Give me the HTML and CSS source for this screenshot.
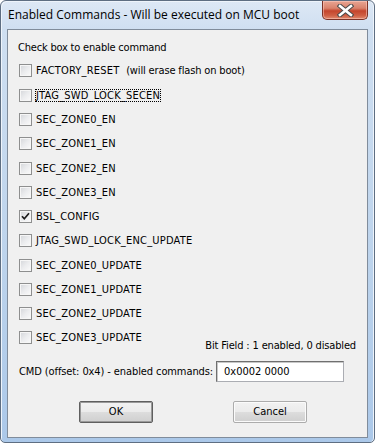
FILE: index.html
```html
<!DOCTYPE html>
<html>
<head>
<meta charset="utf-8">
<link rel="stylesheet" href="styles.css">
</head>
<body>
<div class="window">
  <div class="titlebar">
    <span class="title">Enabled Commands - Will be executed on MCU boot</span>
    <div class="close">
      <svg width="17" height="13" viewBox="0 0 17 13">
        <path d="M3 2 L14 11 M14 2 L3 11" stroke="#4a4a4a" stroke-width="4.6" stroke-linecap="square" fill="none"/>
        <path d="M3 2 L14 11 M14 2 L3 11" stroke="#ffffff" stroke-width="2.6" stroke-linecap="square" fill="none"/>
      </svg>
    </div>
  </div>
  <div class="client">
    <div class="heading">Check box to enable command</div>
    <ul class="list">
      <li class="row"><span class="cb"></span><span class="lbl">FACTORY_RESET&nbsp; <span class="note">(will erase flash on boot)</span></span></li>
      <li class="row"><span class="cb"></span><span class="lbl focus">JTAG_SWD_LOCK_SECEN</span></li>
      <li class="row"><span class="cb"></span><span class="lbl">SEC_ZONE0_EN</span></li>
      <li class="row"><span class="cb"></span><span class="lbl">SEC_ZONE1_EN</span></li>
      <li class="row"><span class="cb"></span><span class="lbl">SEC_ZONE2_EN</span></li>
      <li class="row"><span class="cb"></span><span class="lbl">SEC_ZONE3_EN</span></li>
      <li class="row"><span class="cb checked"><svg width="11" height="11" viewBox="0 0 11 11"><path d="M2 5.2 L4.3 7.8 L9 2.2" stroke="#1c1c1c" stroke-width="1.7" fill="none"/></svg></span><span class="lbl">BSL_CONFIG</span></li>
      <li class="row"><span class="cb"></span><span class="lbl">JTAG_SWD_LOCK_ENC_UPDATE</span></li>
      <li class="row"><span class="cb"></span><span class="lbl">SEC_ZONE0_UPDATE</span></li>
      <li class="row"><span class="cb"></span><span class="lbl">SEC_ZONE1_UPDATE</span></li>
      <li class="row"><span class="cb"></span><span class="lbl">SEC_ZONE2_UPDATE</span></li>
      <li class="row"><span class="cb"></span><span class="lbl">SEC_ZONE3_UPDATE</span></li>
    </ul>
    <div class="bitfield">Bit Field : 1 enabled, 0 disabled</div>
    <div class="cmd">
      <span class="cmd-label">CMD (offset: 0x4) - enabled commands:</span>
      <div class="input">0x0002 0000</div>
    </div>
    <div class="buttons">
      <div class="btn default">OK</div>
      <div class="btn">Cancel</div>
    </div>
  </div>
</div>
</body>
</html>
```
FILE: styles.css
```css
html, body {
  margin: 0;
  padding: 0;
  width: 375px;
  height: 443px;
  overflow: hidden;
  background: #ffffff;
}

.window {
  box-sizing: border-box;
  width: 375px;
  height: 443px;
  border: 1px solid #5e6e82;
  border-radius: 6px 6px 5px 5px;
  background: linear-gradient(to bottom, #dde8f5 0px, #cfdff1 28px, #bcd3ec 60%, #abc8e9 100%);
  display: flex;
  flex-direction: column;
  padding: 0 6px 4px 6px;
  box-shadow: inset 1px 1px 0 #eef4fb, inset -1px 0 0 #eef4fb;
}

.titlebar {
  height: 28px;
  display: flex;
  align-items: flex-start;
  flex-shrink: 0;
}

.title {
  font-family: "Open Sans", "Noto Sans", sans-serif;
  font-size: 12px;
  line-height: 16px;
  color: #000;
  padding-top: 6px;
  padding-left: 1px;
  white-space: nowrap;
}

.close {
  margin-left: auto;
  box-sizing: border-box;
  width: 46px;
  height: 19px;
  border: 1px solid #7b3227;
  border-top: none;
  border-radius: 0 0 5px 5px;
  background: linear-gradient(to bottom, #e8a593 0%, #d9826c 40%, #c4452d 55%, #cf5f44 80%, #e08a6f 100%);
  box-shadow: inset 0 0 0 1px rgba(255, 210, 200, 0.5);
  display: flex;
  align-items: center;
  justify-content: center;
}

.client {
  flex: 1;
  box-sizing: border-box;
  border: 1px solid #808c9b;
  background: #f0f0f0;
  font-family: "DejaVu Sans Condensed", "DejaVu Sans", sans-serif;
  font-stretch: condensed;
  font-size: 11px;
  color: #000;
  display: flex;
  flex-direction: column;
}

.heading {
  line-height: 13px;
  padding: 11px 0 0 10px;
  letter-spacing: -0.2px;
}

.list {
  list-style: none;
  margin: 4.85px 0 0 0;
  padding: 0 0 0 11px;
}

.row {
  height: 24.27px;
  display: flex;
  align-items: center;
}

.cb {
  box-sizing: border-box;
  width: 13px;
  height: 13px;
  border: 1px solid #8e8f8f;
  background: linear-gradient(135deg, #d3d5d9 0%, #ebecee 50%, #fbfbfb 100%);
  box-shadow: inset 0 0 0 1px #f6f6f6;
  margin-right: 3px;
  display: flex;
  align-items: center;
  justify-content: center;
}

.lbl {
  line-height: 13px;
  padding: 0 1px;
  white-space: nowrap;
  letter-spacing: 0.2px;
}

.note {
  letter-spacing: -0.15px;
}

.lbl.focus {
  outline: 1px dotted #000;
  outline-offset: -1px;
}

.bitfield {
  line-height: 13px;
  margin-top: -10.6px;
  text-align: right;
  padding-right: 11px;
  letter-spacing: -0.15px;
}

.cmd {
  display: flex;
  align-items: center;
  justify-content: space-between;
  margin-top: 8.2px;
  padding: 0 23px 0 11px;
}

.cmd-label {
  line-height: 13px;
  white-space: nowrap;
  letter-spacing: -0.1px;
}

.input {
  box-sizing: border-box;
  width: 128px;
  height: 21px;
  border: 1px solid #abadb3;
  border-top-color: #6f6f6f;
  border-left-color: #6f6f6f;
  background: #ffffff;
  box-shadow: inset 1px 1px 0 #c8c8c8;
  line-height: 19px;
  padding-left: 7px;
}

.buttons {
  display: flex;
  gap: 80px;
  margin-top: 19.3px;
  padding-left: 71px;
}

.btn {
  box-sizing: border-box;
  width: 74px;
  height: 22px;
  border: 1px solid #acacac;
  border-radius: 2px;
  background: linear-gradient(to bottom, #f2f2f2 0%, #ebebeb 50%, #dddddd 51%, #cfcfcf 100%);
  box-shadow: inset 0 0 0 1px #fbfbfb;
  text-align: center;
  line-height: 20px;
}

.btn.default {
  border: 1px solid #5f5f5f;
  box-shadow: inset 0 0 0 1px #9a9a9a;
}
```
